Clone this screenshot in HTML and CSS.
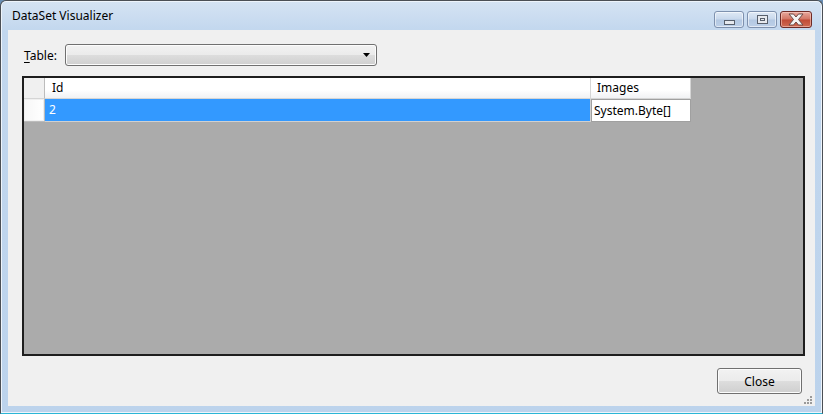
FILE: index.html
```html
<!DOCTYPE html>
<html>
<head>
<meta charset="utf-8">
<link rel="stylesheet" href="styles.css">
</head>
<body>
<div class="window">
  <div class="titlebar">
    <div class="title">DataSet Visualizer</div>
    <div class="caption">
      <div class="cbtn"><span class="min-glyph"></span></div>
      <div class="cbtn"><span class="max-glyph"></span></div>
      <div class="cbtn close">
        <svg width="20" height="13" viewBox="0 0 20 13"><path d="M3 1h4.5l2.5 3 2.5-3H17l-4.5 5.5L17 12h-4.5L10 9l-2.5 3H3l4.5-5.5z" fill="#f4f4f4" stroke="#6b4a47" stroke-width="1"/></svg>
      </div>
    </div>
  </div>
  <div class="client">
    <div class="toolbar">
      <label class="lbl"><u>T</u>able:</label>
      <div class="combo">
        <svg class="arrow" width="8" height="5" viewBox="0 0 8 5"><path d="M0 0h7L3.5 4z" fill="#000"/></svg>
      </div>
    </div>
    <div class="grid">
      <div class="gtable">
        <div class="hcell corner"></div>
        <div class="hcell col-id">Id</div>
        <div class="hcell col-img">Images</div>
        <div class="rhead"><span></span></div>
        <div class="cell sel">2</div>
        <div class="cell cur">System.Byte[]</div>
      </div>
    </div>
    <div class="footer">
      <button class="btn">Close</button>
    </div>
    <div class="grip">
      <svg width="9" height="9" viewBox="0 0 9 9"><g fill="#9a9a9a"><rect x="6" y="0" width="2" height="2"/><rect x="3" y="3" width="2" height="2"/><rect x="6" y="3" width="2" height="2"/><rect x="0" y="6" width="2" height="2"/><rect x="3" y="6" width="2" height="2"/><rect x="6" y="6" width="2" height="2"/></g></svg>
    </div>
  </div>
</div>
</body>
</html>
```

FILE: styles.css
```css
* { box-sizing: border-box; }
html, body { margin: 0; padding: 0; }
body {
  width: 823px;
  height: 414px;
  overflow: hidden;
  font-family: "Noto Sans", "Open Sans", sans-serif;
  font-size: 12px;
  color: #000;
  background: #6a8fb5;
}
.window {
  width: 823px;
  height: 414px;
  border: 1px solid #4b4f55;
  border-bottom-color: #2bb6d6;
  border-radius: 6px 6px 0 0;
  background: linear-gradient(to bottom, #d5e3f3 0px, #c2d7ee 30px, #bcd3ec 100%);
  display: flex;
  flex-direction: column;
  padding: 0 7px 7px 7px;
  box-shadow: inset 0 0 0 1px #eef4fb;
}
.titlebar {
  height: 29px;
  display: flex;
  align-items: flex-start;
  justify-content: space-between;
}
.title {
  padding: 7px 0 0 4px;
  font-size: 12px;
  line-height: 16px;
  color: #000;
}
.caption {
  display: flex;
  gap: 3px;
  padding-top: 10px;
  margin-right: 3px;
}
.cbtn {
  width: 30px;
  height: 17px;
  border: 1px solid #7e91ae;
  border-radius: 3px;
  background: linear-gradient(to bottom, #dfe9f5 0%, #c8d8ec 48%, #b3c8e2 52%, #bdd0e8 100%);
  box-shadow: inset 0 0 0 1px rgba(255,255,255,0.55);
  display: flex;
  align-items: center;
  justify-content: center;
}
.cbtn.close {
  width: 32px;
  border-color: #6e2a26;
  background: linear-gradient(to bottom, #e8a79c 0%, #d27564 48%, #c04a36 52%, #cf6a52 100%);
  box-shadow: inset 0 0 0 1px rgba(255,220,210,0.5);
}
.min-glyph {
  display: block;
  width: 11px;
  height: 5px;
  margin-top: 5px;
  border: 1px solid #58606c;
  background: #e6e9ee;
}
.max-glyph {
  display: block;
  width: 11px;
  height: 9px;
  border: 1px solid #58606c;
  background: #e6e9ee;
  box-shadow: inset 0 0 0 2px #e6e9ee, inset 0 0 0 3px #58606c;
}
.client {
  flex: 1;
  background: #f0f0f0;
  display: flex;
  flex-direction: column;
  position: relative;
  padding: 14px 10px 0 14px;
}
.toolbar {
  display: flex;
  align-items: center;
  height: 22px;
}
.lbl {
  width: 43px;
  padding-left: 2px;
  font-size: 12px;
}
.lbl u { text-decoration: underline; text-underline-offset: 2px; }
.combo {
  width: 312px;
  height: 22px;
  border: 1px solid #707070;
  border-radius: 3px;
  background: linear-gradient(to bottom, #f2f2f2 0%, #ebebeb 50%, #dddddd 51%, #cfcfcf 100%);
  box-shadow: inset 0 0 0 1px #fcfcfc;
  position: relative;
}
.arrow { position: absolute; right: 5px; top: 8px; }
.grid {
  margin-top: 10px;
  width: 783px;
  height: 280px;
  border: 2px solid #1e1e1e;
  background: #ababab;
}
.gtable {
  display: grid;
  grid-template-columns: 21px 546px 100px;
  grid-template-rows: 21px 23px;
}
.hcell {
  background: linear-gradient(to bottom, #ffffff 0%, #ffffff 60%, #f1f2f4 100%);
  border-right: 1px solid #d5d5d5;
  border-bottom: 1px solid #d5d5d5;
  padding-left: 7px;
  line-height: 20px;
}
.hcell.corner { background: #f0f0f0; border-right-color: #bcbcbc; }
.col-img { padding-left: 6px; }
.rhead {
  background: #f0f0f0;
  border-right: 1px solid #bcbcbc;
  border-bottom: 1px solid #bcbcbc;
  padding: 1px;
}
.rhead span {
  display: block;
  height: 100%;
  width: 100%;
  background: linear-gradient(to right, #f7f7f7, #ffffff);
}
.cell {
  line-height: 22px;
  padding-left: 4px;
  border-bottom: 1px solid #d0d0d0;
  border-right: 1px solid #d0d0d0;
}
.cell.sel {
  background: #3399ff;
  color: #fff;
}
.cell.cur {
  background: #fff;
  border: 1px solid #a0a0a0;
  padding-left: 2px;
}
.footer {
  display: flex;
  justify-content: flex-end;
  padding-top: 12px;
  padding-right: 3px;
}
.btn {
  width: 85px;
  height: 26px;
  font-family: inherit;
  font-size: 12px;
  border: 1px solid #707070;
  border-radius: 3px;
  background: linear-gradient(to bottom, #f2f2f2 0%, #ebebeb 50%, #dddddd 51%, #cfcfcf 100%);
  box-shadow: inset 0 0 0 1px #fcfcfc;
  padding: 0;
  color: #000;
}
.grip {
  position: absolute;
  right: 2px;
  bottom: 1px;
  width: 9px;
  height: 9px;
}
.grip svg { display: block; }
```
